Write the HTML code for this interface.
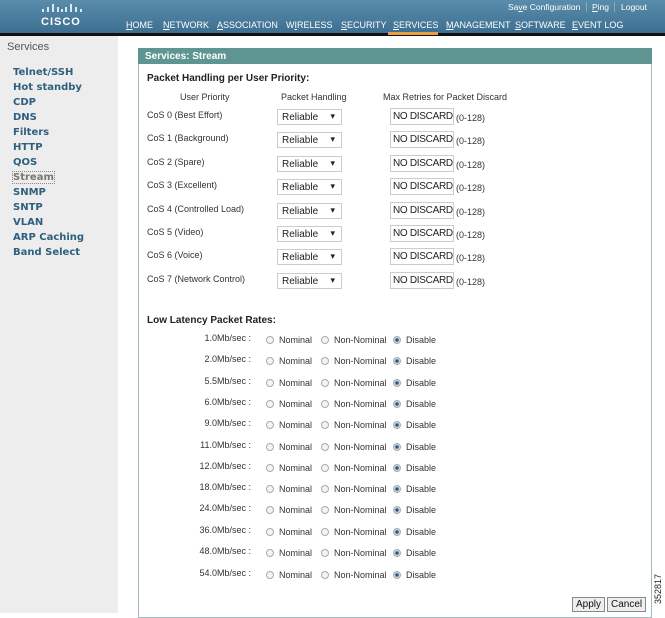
<!DOCTYPE html>
<html><head><style>
*{margin:0;padding:0;box-sizing:border-box}
body{width:665px;height:613px;overflow:hidden;background:#fff;font-family:"Liberation Sans",sans-serif;position:relative}
.a{position:absolute;white-space:nowrap}
#hd{position:absolute;left:0;top:0;width:665px;height:33px;background:linear-gradient(#5a8cab,#3c6f91)}
#bl{position:absolute;left:0;top:33px;width:665px;height:3px;background:#111}
.nav{position:absolute;top:20px;font-size:9px;color:#fff;white-space:nowrap}
.nav u{text-decoration:underline}
.tl{position:absolute;top:2px;font-size:8.5px;color:#fff;white-space:nowrap}
#sb{position:absolute;left:0;top:36px;width:118px;height:577px;background:#ededed}
.sl{position:absolute;left:13px;font-size:10px;font-weight:bold;color:#2f5f7f;font-family:"DejaVu Sans",sans-serif}
#pn{position:absolute;left:138px;top:48px;width:514px;height:570px;border:1px solid #9fbcbc;border-top:none}
#ph{position:absolute;left:138px;top:48px;width:514px;height:16px;background:#5f9590;color:#fff;font-size:10px;font-weight:bold;padding:3px 0 0 7px}
.t{font-size:9px;color:#333}
.sel{position:absolute;left:277px;width:65px;height:16px;border:1px solid #ccc;font-size:10px;color:#222;padding:2px 0 0 4px}
.sel:after{content:"▾";position:absolute;right:6px;top:1px;font-size:9px}
.inp{position:absolute;left:390px;width:64px;height:17px;border:1px solid #ccc;font-size:10px;color:#222;padding:2px 0 0 2px;white-space:nowrap;overflow:hidden;letter-spacing:-0.3px}
.rd{position:absolute;width:8px;height:8px;border-radius:50%;border:1px solid #aaa;background:#f4f4f4}
.rd.on{background:radial-gradient(#2c4f80 35%,#c8d4e4 45%)}
.btn{position:absolute;top:597px;height:15px;border:1px solid #888;background:#eee;font-size:10px;color:#111;padding:1px 3px}
</style></head><body>
<div id="hd"></div><div id="bl"></div>
<div class="a" style="left:388px;top:32px;width:50px;height:3px;background:#e8a040"></div>
<svg class="a" style="left:42px;top:4px" width="40" height="10"><g stroke="#fff" stroke-width="1.6"><line x1="1" y1="5" x2="1" y2="8"/><line x1="6" y1="3" x2="6" y2="8"/><line x1="11" y1="0" x2="11" y2="8"/><line x1="16" y1="3" x2="16" y2="8"/><line x1="20" y1="5" x2="20" y2="8"/><line x1="24" y1="3" x2="24" y2="8"/><line x1="29" y1="0" x2="29" y2="8"/><line x1="34" y1="3" x2="34" y2="8"/><line x1="39" y1="5" x2="39" y2="8"/></g></svg>
<div class="a" style="left:41px;top:16px;color:#fff;font-size:11px;font-weight:bold;letter-spacing:1px">CISCO</div>
<div class="tl" style="left:508px">Sa<u>v</u>e Configuration</div>
<div class="a" style="left:586px;top:2px;width:1px;height:10px;background:#8ab"></div>
<div class="tl" style="left:592px"><u>P</u>ing</div>
<div class="a" style="left:614px;top:2px;width:1px;height:10px;background:#8ab"></div>
<div class="tl" style="left:621px">Logout</div>
<div class="nav" style="left:126px"><u>H</u>OME</div>
<div class="nav" style="left:163px"><u>N</u>ETWORK</div>
<div class="nav" style="left:217px"><u>A</u>SSOCIATION</div>
<div class="nav" style="left:286px">W<u>I</u>RELESS</div>
<div class="nav" style="left:341px"><u>S</u>ECURITY</div>
<div class="nav" style="left:393px"><u>S</u>ERVICES</div>
<div class="nav" style="left:446px"><u>M</u>ANAGEMENT</div>
<div class="nav" style="left:515px"><u>S</u>OFTWARE</div>
<div class="nav" style="left:572px"><u>E</u>VENT LOG</div>
<div id="sb"></div>
<div class="a" style="left:7px;top:41px;font-size:11px;color:#555">Services</div>
<div class="sl" style="top:67px">Telnet/SSH</div>
<div class="sl" style="top:82px">Hot standby</div>
<div class="sl" style="top:97px">CDP</div>
<div class="sl" style="top:112px">DNS</div>
<div class="sl" style="top:127px">Filters</div>
<div class="sl" style="top:142px">HTTP</div>
<div class="sl" style="top:157px">QOS</div>
<div class="sl" style="top:172px;color:#777;outline:1px dotted #888">Stream</div>
<div class="sl" style="top:187px">SNMP</div>
<div class="sl" style="top:202px">SNTP</div>
<div class="sl" style="top:217px">VLAN</div>
<div class="sl" style="top:232px">ARP Caching</div>
<div class="sl" style="top:247px">Band Select</div>
<div id="pn"></div>
<div id="ph">Services: Stream</div>
<div class="a" style="left:147px;top:73px;font-size:10px;font-weight:bold;color:#222">Packet Handling per User Priority:</div>
<div class="a t" style="left:180px;top:92px">User Priority</div>
<div class="a t" style="left:281px;top:92px">Packet Handling</div>
<div class="a t" style="left:383px;top:92px">Max Retries for Packet Discard</div>
<div class="a t" style="left:147px;top:110px">CoS 0 (Best Effort)</div><div class="sel" style="top:109px">Reliable</div><div class="inp" style="top:108px">NO DISCARD</div><div class="a t" style="left:456px;top:113px">(0-128)</div>
<div class="a t" style="left:147px;top:133px">CoS 1 (Background)</div><div class="sel" style="top:132px">Reliable</div><div class="inp" style="top:131px">NO DISCARD</div><div class="a t" style="left:456px;top:136px">(0-128)</div>
<div class="a t" style="left:147px;top:157px">CoS 2 (Spare)</div><div class="sel" style="top:156px">Reliable</div><div class="inp" style="top:155px">NO DISCARD</div><div class="a t" style="left:456px;top:160px">(0-128)</div>
<div class="a t" style="left:147px;top:180px">CoS 3 (Excellent)</div><div class="sel" style="top:179px">Reliable</div><div class="inp" style="top:178px">NO DISCARD</div><div class="a t" style="left:456px;top:183px">(0-128)</div>
<div class="a t" style="left:147px;top:204px">CoS 4 (Controlled Load)</div><div class="sel" style="top:203px">Reliable</div><div class="inp" style="top:202px">NO DISCARD</div><div class="a t" style="left:456px;top:207px">(0-128)</div>
<div class="a t" style="left:147px;top:227px">CoS 5 (Video)</div><div class="sel" style="top:226px">Reliable</div><div class="inp" style="top:225px">NO DISCARD</div><div class="a t" style="left:456px;top:230px">(0-128)</div>
<div class="a t" style="left:147px;top:250px">CoS 6 (Voice)</div><div class="sel" style="top:249px">Reliable</div><div class="inp" style="top:248px">NO DISCARD</div><div class="a t" style="left:456px;top:253px">(0-128)</div>
<div class="a t" style="left:147px;top:274px">CoS 7 (Network Control)</div><div class="sel" style="top:273px">Reliable</div><div class="inp" style="top:272px">NO DISCARD</div><div class="a t" style="left:456px;top:277px">(0-128)</div>
<div class="a" style="left:147px;top:315px;font-size:10px;font-weight:bold;color:#222">Low Latency Packet Rates:</div>
<div id="rates"></div>
<script>
var r=["1.0","2.0","5.5","6.0","9.0","11.0","12.0","18.0","24.0","36.0","48.0","54.0"],ys=[340,361,383,404,425,447,468,489,510,532,553,575],h="";
for(var i=0;i<12;i++){var y=ys[i];
h+='<div class="a t" style="right:414px;top:'+(y-7)+'px">'+r[i]+'Mb/sec :</div>'+
'<div class="rd" style="left:266px;top:'+(y-4)+'px"></div><div class="a t" style="left:279px;top:'+(y-5)+'px">Nominal</div>'+
'<div class="rd" style="left:321px;top:'+(y-4)+'px"></div><div class="a t" style="left:334px;top:'+(y-5)+'px">Non-Nominal</div>'+
'<div class="rd on" style="left:393px;top:'+(y-4)+'px"></div><div class="a t" style="left:406px;top:'+(y-5)+'px">Disable</div>';}
document.getElementById("rates").outerHTML=h;
</script>
<div class="btn" style="left:572px">Apply</div>
<div class="btn" style="left:607px">Cancel</div>
<div class="a" style="left:653px;top:604px;font-size:9px;color:#222;transform:rotate(-90deg);transform-origin:left top">352817</div>
</body></html>
